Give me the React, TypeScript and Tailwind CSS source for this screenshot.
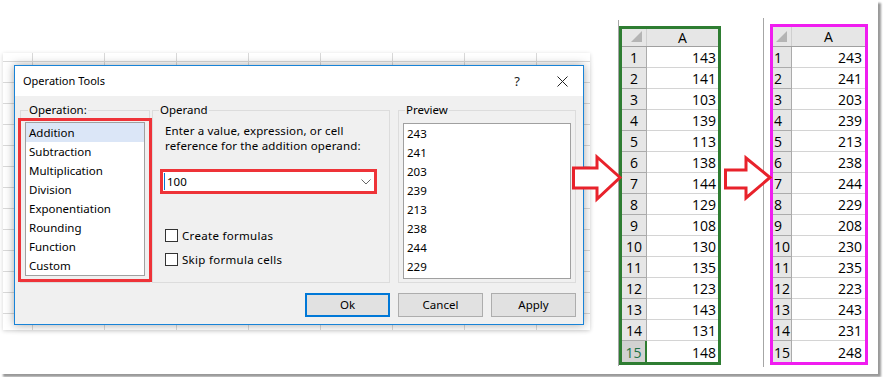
import React from "react";

const operations = ["Addition", "Subtraction", "Multiplication", "Division", "Exponentiation", "Rounding", "Function", "Custom"];
const previewValues = ["243", "241", "203", "239", "213", "238", "244", "229"];
const beforeValues = [143, 141, 103, 139, 113, 138, 144, 129, 108, 130, 135, 123, 143, 131, 148];
const afterValues = [243, 241, 203, 239, 213, 238, 244, 229, 208, 230, 235, 223, 243, 231, 248];

function Checkbox({ label }: { label: string }) {
  return (
    <div className="flex items-center h-[13px]">
      <div className="w-[13px] h-[13px] border border-[#333] bg-white" />
      <span className="ml-[4px] leading-[13px] tracking-[0.3px]">{label}</span>
    </div>
  );
}

function Dialog() {
  return (
    <div className="w-[570px] h-[260px] border border-[#1883d7] bg-[#f0f0f0] shadow-[0_0_9px_rgba(0,0,0,0.35)] flex flex-col text-[11.5px] text-black">
      {/* Title bar */}
      <div className="h-[30px] bg-white flex items-center pl-[8px] pr-[15px] text-[11px]">
        <span className="flex-1">Operation Tools</span>
        <span className="text-[13px] leading-none text-[#222]">?</span>
        <svg width="11" height="11" viewBox="0 0 11 11" className="ml-[37px]">
          <path d="M0.5 0.5 L10.5 10.5 M10.5 0.5 L0.5 10.5" stroke="#222" strokeWidth="1" fill="none" />
        </svg>
      </div>

      {/* Groups */}
      <div className="flex items-start pl-[5px] pt-[6px]">
        <fieldset className="min-w-0 w-[130px] h-[181px] border border-[#dcdcdc]">
          <legend className="ml-[7px] px-[1px] leading-[16px]">Operation:</legend>
          <div className="-ml-[3px] -mr-[3px] w-[134px] h-[164px] border-[3px] border-[#ee3338] pt-[1px] pl-[4px]">
            <div className="w-[120px] h-[154px] bg-white border border-[#a0a0a0]">
              {operations.map((op, i) => (
                <div
                  key={op}
                  className={`h-[19px] leading-[19px] pl-[3px] ${i === 0 ? "bg-[#dbe6f7]" : ""}`}
                >
                  {op}
                </div>
              ))}
            </div>
          </div>
        </fieldset>

        <fieldset className="min-w-0 ml-[2px] w-[238px] h-[181px] border border-[#dcdcdc]">
          <legend className="ml-[6px] px-[1px] leading-[16px]">Operand</legend>
          <div className="pl-[12px] mt-[5px] leading-[15px] tracking-[0.15px] whitespace-nowrap">
            Enter a value, expression, or cell
            <br />
            reference for the addition operand:
          </div>
          <div className="ml-[7px] mt-[16px] w-[217px] h-[25px] border-[3px] border-[#ee3338] bg-white pl-[1px] py-[1px]">
            <div className="h-full border-l border-[#0078d7] flex items-center pl-[2px] pr-[3px]">
              <span className="flex-1">100</span>
              <svg width="10" height="6" viewBox="0 0 10 6">
                <path d="M0.5 0.5 L5 5 L9.5 0.5" stroke="#666" strokeWidth="1" fill="none" />
              </svg>
            </div>
          </div>
          <div className="pl-[12px] mt-[35px] flex flex-col gap-[11px]">
            <Checkbox label="Create formulas" />
            <Checkbox label="Skip formula cells" />
          </div>
        </fieldset>

        <fieldset className="min-w-0 ml-[8px] w-[178px] h-[181px] border border-[#dcdcdc]">
          <legend className="ml-[6px] px-[1px] leading-[16px]">Preview</legend>
          <div className="ml-[4px] mt-[5px] w-[168px] h-[156px] bg-white border border-[#a0a0a0]">
            {previewValues.map((v, i) => (
              <div key={i} className="h-[19px] leading-[19px] pl-[3px]">
                {v}
              </div>
            ))}
          </div>
        </fieldset>
      </div>

      {/* Buttons */}
      <div className="flex justify-end gap-[8px] pr-[7px] mt-[10px]">
        <button className="w-[85px] h-[24px] border-2 border-[#0078d7] bg-[#e1e1e1]">Ok</button>
        <button className="w-[85px] h-[24px] border border-[#adadad] bg-[#e1e1e1]">Cancel</button>
        <button className="w-[85px] h-[24px] border border-[#adadad] bg-[#e1e1e1]">Apply</button>
      </div>
    </div>
  );
}

function Corner() {
  return (
    <svg width="11" height="11" viewBox="0 0 11 11" className="absolute right-[4px] bottom-[4px]">
      <polygon points="11,0 11,11 0,11" fill="#b4b4b4" />
    </svg>
  );
}

function GreenSheet() {
  return (
    <div className="mt-[20px] h-[346px] border-l border-[#a6a6a6] pt-[6px]">
      <div className="w-[102px] border-[3px] border-[#2e7d32] bg-white">
        <div className="flex h-[18px] bg-[#e6e6e6] border-b border-[#a0a0a0]">
          <div className="relative w-[25px] border-r border-[#cfcfcf]">
            <Corner />
          </div>
          <div className="flex-1 flex items-center justify-center">A</div>
        </div>
        {beforeValues.map((v, i) => {
          const last = i === beforeValues.length - 1;
          return (
            <div key={i} className="flex h-[21px]">
              <div
                className={`w-[25px] flex items-center justify-center pt-[1px] ${
                  last
                    ? "bg-[#d2d2d2] text-[#217346] border-r-2 border-[#2e7d32]"
                    : "bg-[#e6e6e6] border-r border-b border-[#ababab]"
                }`}
              >
                {i + 1}
              </div>
              <div
                className={`flex-1 flex items-center justify-end pr-[2px] pt-[1px] ${
                  last ? "" : "border-b border-[#d4d4d4]"
                }`}
              >
                {v}
              </div>
            </div>
          );
        })}
      </div>
    </div>
  );
}

function PinkSheet() {
  return (
    <div className="ml-[42px] mt-[18px] h-[349px] border-l border-[#a6a6a6] pl-[6px] pt-[6px]">
      <div className="w-[98px] border-[3px] border-[#f01df0] bg-white">
        <div className="flex h-[20px] bg-[#e6e6e6] border-b border-[#a0a0a0]">
          <div className="relative w-[19px] border-r border-[#cfcfcf]">
            <Corner />
          </div>
          <div className="flex-1 flex items-center justify-center">A</div>
        </div>
        {afterValues.map((v, i) => {
          const last = i === afterValues.length - 1;
          return (
            <div key={i} className="flex h-[21px]">
              <div
                className={`w-[19px] flex items-center pl-[1px] pt-[1px] bg-[#e6e6e6] border-r border-[#ababab] ${
                  last ? "" : "border-b"
                }`}
              >
                {i + 1}
              </div>
              <div
                className={`flex-1 flex items-center justify-end pr-[3px] pt-[1px] ${
                  last ? "" : "border-b border-[#d4d4d4]"
                }`}
              >
                {v}
              </div>
            </div>
          );
        })}
      </div>
    </div>
  );
}

export default function App() {
  return (
    <div className="w-[884px] h-[377px] bg-white overflow-hidden font-['Noto_Sans',sans-serif]">
      <div className="relative w-[878px] h-[374px] bg-white shadow-[3px_3px_2px_rgba(0,0,0,0.4)] flex items-start">
        {/* worksheet behind the dialog */}
        <div className="ml-[3px] mt-[53px] w-[587px] h-[277px] pl-[11px] pt-[12px] bg-white bg-[linear-gradient(to_right,#d9d9d9_1px,transparent_1px),linear-gradient(to_bottom,#d9d9d9_1px,transparent_1px)] bg-[length:72px_21px] bg-[position:29px_8px] shadow-[0_1px_4px_rgba(0,0,0,0.18)]">
          <Dialog />
        </div>

        <div className="ml-[28px] flex items-start font-['Open_Sans',sans-serif] text-[14px] text-black">
          <GreenSheet />
          <PinkSheet />
        </div>

        {/* arrows */}
        <svg className="absolute left-0 top-0 pointer-events-none" width="878" height="374" viewBox="0 0 878 374">
          <polygon
            points="573.5,168 597,168 597,157 620,177.5 597,199 597,188 573.5,188"
            fill="white"
            stroke="#e8222b"
            strokeWidth="3"
          />
          <polygon
            points="725.5,170 746,170 746,158 770,177.5 746,198 746,188 725.5,188"
            fill="white"
            stroke="#e8222b"
            strokeWidth="3"
          />
        </svg>
      </div>
    </div>
  );
}
